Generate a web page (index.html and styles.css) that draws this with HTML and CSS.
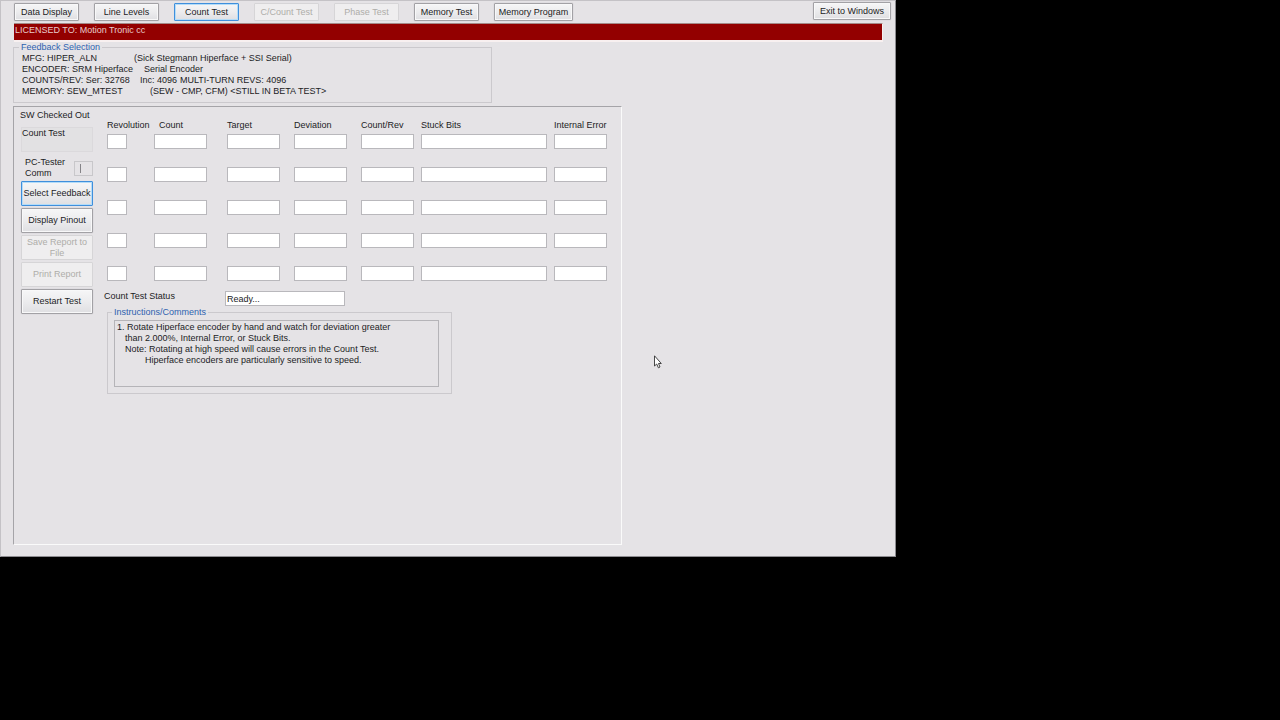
FILE: index.html
```html
<!DOCTYPE html>
<html lang="en">
<head>
<meta charset="utf-8">
<title>Feedback Tester - Count Test</title>
<link rel="stylesheet" href="styles.css">
</head>
<body>
<div class="window">
  <nav class="toolbar">
    <button type="button" class="btn tab">Data Display</button>
    <button type="button" class="btn tab">Line Levels</button>
    <button type="button" class="btn tab active">Count Test</button>
    <button type="button" class="btn tab" disabled>C/Count Test</button>
    <button type="button" class="btn tab" disabled>Phase Test</button>
    <button type="button" class="btn tab">Memory Test</button>
    <button type="button" class="btn tab wide">Memory Program</button>
    <button type="button" class="btn exit">Exit to Windows</button>
  </nav>
  <div class="license">LICENSED TO: Motion Tronic cc</div>
  <fieldset class="group feedback">
    <legend>Feedback Selection</legend>
    <div><span class="mfg">MFG: HIPER_ALN</span><span>(Sick Stegmann Hiperface + SSI Serial)</span></div>
    <div><span class="encoder">ENCODER: SRM Hiperface</span><span>Serial Encoder</span></div>
    <div><span class="counts">COUNTS/REV: Ser: 32768</span><span class="inc">Inc: 4096</span><span>MULTI-TURN REVS: 4096</span></div>
    <div><span class="memory">MEMORY: SEW_MTEST</span><span>(SEW - CMP, CFM) &lt;STILL IN BETA TEST&gt;</span></div>
  </fieldset>
  <main class="panel">
    <aside class="side">
      <div class="caption">SW Checked Out</div>
      <div class="checked">Count Test</div>
      <div class="comm"><span>PC-Tester<br>Comm</span><span class="lamp"></span></div>
      <div class="actions">
        <button type="button" class="btn active nowrap">Select Feedback</button>
        <button type="button" class="btn">Display Pinout</button>
        <button type="button" class="btn" disabled>Save Report to File</button>
        <button type="button" class="btn" disabled>Print Report</button>
        <button type="button" class="btn">Restart Test</button>
      </div>
    </aside>
    <section class="test">
      <table class="results">
        <thead>
          <tr><th class="rev">Revolution</th><th class="count">Count</th><th class="target">Target</th><th class="dev">Deviation</th><th class="per">Count/Rev</th><th class="stuck">Stuck Bits</th><th class="err">Internal Error</th></tr>
        </thead>
        <tbody>
          <tr><td class="rev"><input aria-label="Revolution 1"></td><td class="count"><input aria-label="Count 1"></td><td class="target"><input aria-label="Target 1"></td><td class="dev"><input aria-label="Deviation 1"></td><td class="per"><input aria-label="Count/Rev 1"></td><td class="stuck"><input aria-label="Stuck Bits 1"></td><td class="err"><input aria-label="Internal Error 1"></td></tr>
          <tr><td class="rev"><input aria-label="Revolution 2"></td><td class="count"><input aria-label="Count 2"></td><td class="target"><input aria-label="Target 2"></td><td class="dev"><input aria-label="Deviation 2"></td><td class="per"><input aria-label="Count/Rev 2"></td><td class="stuck"><input aria-label="Stuck Bits 2"></td><td class="err"><input aria-label="Internal Error 2"></td></tr>
          <tr><td class="rev"><input aria-label="Revolution 3"></td><td class="count"><input aria-label="Count 3"></td><td class="target"><input aria-label="Target 3"></td><td class="dev"><input aria-label="Deviation 3"></td><td class="per"><input aria-label="Count/Rev 3"></td><td class="stuck"><input aria-label="Stuck Bits 3"></td><td class="err"><input aria-label="Internal Error 3"></td></tr>
          <tr><td class="rev"><input aria-label="Revolution 4"></td><td class="count"><input aria-label="Count 4"></td><td class="target"><input aria-label="Target 4"></td><td class="dev"><input aria-label="Deviation 4"></td><td class="per"><input aria-label="Count/Rev 4"></td><td class="stuck"><input aria-label="Stuck Bits 4"></td><td class="err"><input aria-label="Internal Error 4"></td></tr>
          <tr><td class="rev"><input aria-label="Revolution 5"></td><td class="count"><input aria-label="Count 5"></td><td class="target"><input aria-label="Target 5"></td><td class="dev"><input aria-label="Deviation 5"></td><td class="per"><input aria-label="Count/Rev 5"></td><td class="stuck"><input aria-label="Stuck Bits 5"></td><td class="err"><input aria-label="Internal Error 5"></td></tr>
        </tbody>
      </table>
      <div class="status">
        <label for="status">Count Test Status</label>
        <input id="status" value="Ready...">
      </div>
      <fieldset class="group notes">
        <legend>Instructions/Comments</legend>
        <div class="notes-text">
          <div>1. Rotate Hiperface encoder by hand and watch for deviation greater</div>
          <div class="indent">than 2.000%, Internal Error, or Stuck Bits.</div>
          <div class="indent">Note: Rotating at high speed will cause errors in the Count Test.</div>
          <div class="indent-deep">Hiperface encoders are particularly sensitive to speed.</div>
        </div>
      </fieldset>
    </section>
  </main>
  <svg class="cursor" width="8" height="14" viewBox="0 0 8 14"><path d="M.5.8V11L2.700 9 4.400 12.800 6 12 4.500 8.500H7.300Z" fill="#fff" stroke="#333" stroke-width="0.900"/></svg>
</div>
</body>
</html>
```
FILE: styles.css
```css
* { box-sizing: border-box; }

body {
  margin: 0;
  background: #000;
  color: #1c1c1e;
  font: 9px/11px "Liberation Sans", Arial, sans-serif;
}

button, input { font: inherit; color: inherit; }

.window {
  position: relative;
  width: 70%;
  padding: 1px 12px 11px 12px;
  background: #e5e3e6;
  border: 1px solid #8d8c90;
  border-top-color: #c4c2c6;
  border-left-color: #c4c2c6;
}

.btn {
  padding: 0;
  background: linear-gradient(#f6f6f7, #ececee 50%, #dfdfe2);
  border: 1px solid #a2a1a5;
  border-radius: 1px;
  box-shadow: inset 0 0 0 1px #f8f8f9, 0 0 1px #b0afb3;
}

.btn.active {
  border-color: #3f8fdc;
  box-shadow: inset 0 0 0 1px #b4dcf8;
}

.btn:disabled {
  color: #aeada9;
  background: #efeeef;
  border-color: #d6d5d7;
  box-shadow: none;
}

.nowrap { white-space: nowrap; }

.toolbar { display: flex; gap: 15px; padding: 1px 0 0 1px; }
.tab { width: 65px; height: 18px; margin-bottom: 2px; white-space: nowrap; }
.tab.wide { width: 79px; }
.exit { width: 78px; height: 18px; margin: -1px -8px 0 auto; white-space: nowrap; }

.license {
  height: 19px;
  margin: 0 0 0 1px;
  padding: 1px 0 0 1px;
  background: #930000;
  color: #e8cccc;
  border: 1px solid #a48a88;
  border-right-color: #f8f0f0;
  border-bottom: 2px solid #f8f0f0;
  border-left: 0;
}

.group { margin: 0; border: 1px solid #cbc9cd; }
.group legend { padding: 0 2px; color: #2e62b0; }

.feedback {
  width: 55%;
  min-width: min-content;
  padding: 0 8px 5px;
  white-space: nowrap;
}
.feedback legend { margin-left: -3px; }
.feedback span { display: inline-block; }
.mfg { width: 112px; }
.encoder { width: 122px; }
.counts { width: 118px; }
.inc { width: 40px; }
.memory { width: 128px; }

.panel {
  display: flex;
  gap: 14px;
  width: 70%;
  min-width: min-content;
  min-height: 439px;
  margin-top: 3px;
  padding: 3px 14px 0 7px;
  border: 1px solid #fafafa;
  border-top-color: #a5a4a8;
  border-left-color: #a5a4a8;
}

.side { flex: 0 0 72px; }
.caption { margin-left: -1px; white-space: nowrap; }
.checked {
  height: 25px;
  margin-top: 6px;
  background: #e2e1e3;
  border: 1px solid #dbd9dc;
}
.comm {
  display: flex;
  align-items: center;
  justify-content: space-between;
  margin: 5px 0 2px;
  padding-left: 4px;
}
.lamp {
  display: flex;
  align-items: center;
  padding-left: 5px;
  width: 19px;
  height: 15px;
  border: 1px solid #c8c7ca;
}
.lamp::before { content: ""; width: 1px; height: 9px; background: #858488; }
.actions { display: grid; gap: 2px; }
.actions .btn { height: 25px; }

.test { flex: 1; padding-top: 10px; }
.results { width: 100%; table-layout: fixed; border-collapse: collapse; }
.results th { padding: 0 0 3px; font-weight: normal; text-align: left; white-space: nowrap; }
.results td { padding: 0 0 18px; }
.results tr:last-child td { padding-bottom: 0; }
.results th.rev { width: 47px; }
.results th.count { width: 73px; padding-left: 5px; }
.results th.target, .results th.dev { width: 67px; }
.results th.per { width: 60px; }
.results th.err { width: 53px; }
.results td.rev { padding-right: 27px; }
.results td.count { padding-right: 20px; }
.results td.target, .results td.dev { padding-right: 14px; }
.results td.per, .results td.stuck { padding-right: 7px; }

input {
  display: block;
  width: 100%;
  height: 15px;
  padding: 0 1px;
  background: #fff;
  border: 1px solid #b9b8bc;
  border-radius: 0;
}

.status { display: flex; margin: 10px 0 0 -3px; }
.status label { width: 121px; }
.status input { width: 120px; }

.notes { width: 69%; min-width: min-content; margin-top: 1px; padding: 0 12px 6px 6px; }
.notes legend { margin-left: -2px; }
.notes-text {
  min-height: 67px;
  margin-top: 2px;
  padding: 1px 2px;
  border: 1px solid #b5b4b8;
  white-space: nowrap;
}
.indent { padding-left: 8px; }
.indent-deep { padding-left: 28px; }

.cursor { position: absolute; left: 653px; top: 354px; }
```
